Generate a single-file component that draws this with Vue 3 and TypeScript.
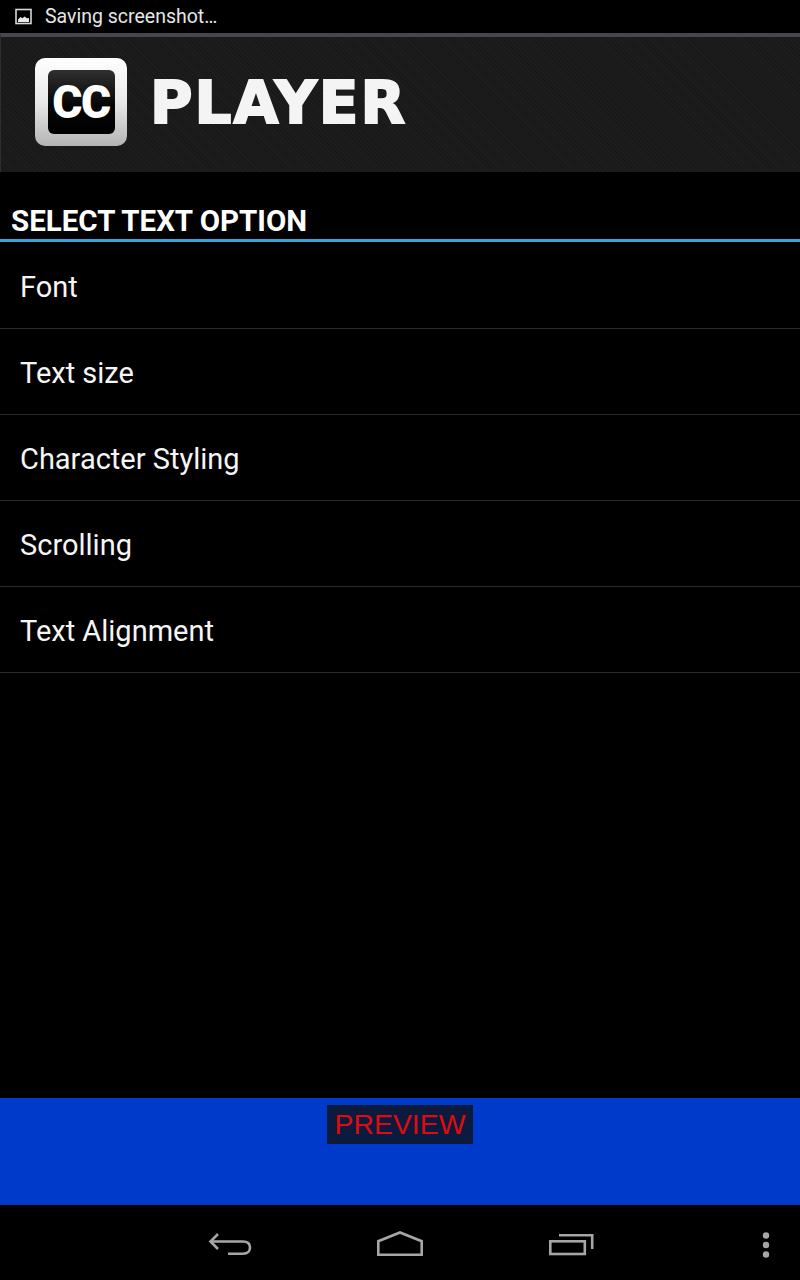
<script setup lang="ts">
const options: string[] = ['Font', 'Text size', 'Character Styling', 'Scrolling', 'Text Alignment']
</script>

<template>
  <div class="screen">
    <div class="status">
      <svg class="status-icon" width="18" height="18" viewBox="0 0 18 18">
        <rect x="1" y="1.500" width="15" height="14" fill="none" stroke="#d8d8d8" stroke-width="1.600" />
        <path d="M3 14v-2.500l2.500-2.500 2 1.200 2-1.700 2.500 1.800L14 10v4z" fill="#e8e8e8" />
      </svg>
      <span class="status-text">Saving screenshot…</span>
    </div>
    <header class="banner">
      <div class="logo">
        <div class="logo-inner"><span class="cc">CC</span></div>
      </div>
      <span class="word">PLAYER</span>
    </header>
    <h1 class="title">SELECT TEXT OPTION</h1>
    <ul class="list">
      <li v-for="o in options" :key="o" class="row">{{ o }}</li>
    </ul>
    <div class="preview-bar"><span class="preview">PREVIEW</span></div>
    <nav class="nav">
      <svg class="back" width="46" height="26" viewBox="0 0 46 26" fill="none" stroke="#a6a6a6" stroke-width="2.600">
        <path d="M11 3 3.500 10.500 11 18" />
        <path d="M3.500 10.500H36c5 0 7 2.800 7 6s-2 6.200-7 6.200H21" />
      </svg>
      <svg class="home" width="50" height="26" viewBox="0 0 50 26" fill="none" stroke="#a6a6a6" stroke-width="2.600">
        <path d="M3.300 23.700V10.200L25 1.500l21.700 8.700v13.500z" />
      </svg>
      <svg class="recent" width="46" height="24" viewBox="0 0 46 24" fill="none" stroke="#a6a6a6" stroke-width="2.600">
        <rect x="2.300" y="8.300" width="34.500" height="12.700" />
        <path d="M11 2.300h33.200V16" />
      </svg>
      <svg class="more" width="8" height="26" viewBox="0 0 8 26" fill="#a6a6a6">
        <circle cx="4" cy="3.500" r="3.200" />
        <circle cx="4" cy="13" r="3.200" />
        <circle cx="4" cy="22.500" r="3.200" />
      </svg>
    </nav>
  </div>
</template>

<style scoped>
.screen {
  width: 800px;
  height: 1280px;
  background: #000;
  display: flex;
  flex-direction: column;
  overflow: hidden;
  font-family: Roboto, "Liberation Sans", sans-serif;
  color: #fff;
}
.status {
  height: 33px;
  display: flex;
  align-items: center;
  padding-left: 15px;
  gap: 12px;
  box-sizing: border-box;
}
.status-icon { flex: none; }
.status-text {
  font-size: 19.500px;
  color: #e6e6e6;
}
.banner {
  height: 139px;
  box-sizing: border-box;
  border-top: 4px solid #46464c;
  border-left: 1px solid #2e2e2e;
  background: repeating-linear-gradient(45deg, #1e1e1e 0 1px, #191919 1px 3px);
  display: flex;
  align-items: center;
  padding-left: 34px;
  gap: 23px;
}
.logo {
  width: 92px;
  height: 88px;
  margin-top: -5px;
  box-sizing: border-box;
  border-radius: 10px;
  background: linear-gradient(180deg, #ffffff 0%, #e8e8e8 50%, #b4b4b4 100%);
  padding: 12px 12px 12px 13px;
}
.logo-inner {
  height: 100%;
  border-radius: 6px;
  background: linear-gradient(180deg, #303030 0%, #050505 55%, #000 100%);
  display: flex;
  align-items: center;
  justify-content: center;
}
.cc {
  font-family: Roboto, sans-serif;
  font-weight: 900;
  font-size: 46px;
  letter-spacing: -1.500px;
  margin-left: -1px;
  color: #fff;
  line-height: 1;
}
.word {
  font-family: "DejaVu Sans", sans-serif;
  font-weight: 700;
  font-size: 58px;
  line-height: 1;
  letter-spacing: 2px;
  margin-top: -3px;
  color: #f4f4f4;
  -webkit-text-stroke: 2px #f4f4f4;
}
.title {
  margin: 0;
  height: 70px;
  box-sizing: border-box;
  padding: 31px 0 0 11px;
  border-bottom: 3px solid #33a5d8;
  font-size: 29.500px;
  font-weight: 700;
  line-height: 37px;
  color: #fff;
}
.list {
  list-style: none;
  margin: 1px 0 0;
  padding: 0;
  flex: 1;
}
.row {
  height: 86px;
  box-sizing: border-box;
  border-bottom: 1px solid #2a2a2a;
  padding: 2px 0 0 20px;
  display: flex;
  align-items: center;
  font-size: 29px;
  color: #f5f5f5;
}
.preview-bar {
  height: 107px;
  background: #003acb;
  display: flex;
  justify-content: center;
  align-items: flex-start;
  padding-top: 7px;
  box-sizing: border-box;
}
.preview {
  height: 39px;
  width: 146px;
  background: #0c1a3e;
  color: #dd0c10;
  font-family: "Liberation Sans", sans-serif;
  font-size: 28.400px;
  line-height: 39px;
  text-align: center;
}
.nav {
  height: 75px;
  position: relative;
}
.nav svg { position: absolute; }
.back { left: 207px; top: 26px; }
.home { left: 375px; top: 26px; }
.recent { left: 548px; top: 28px; }
.more { left: 762px; top: 27px; }
</style>

<style>
html, body { background: #000; }
</style>
